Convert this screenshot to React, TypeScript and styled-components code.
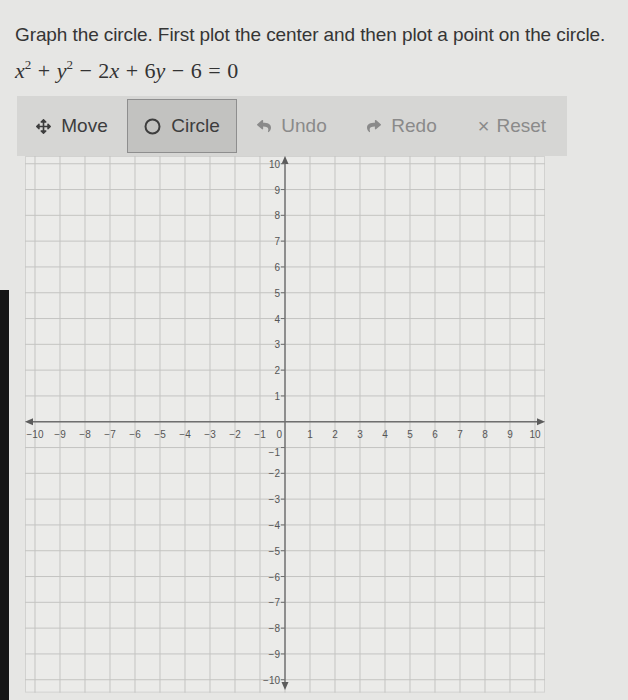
import { FC, ReactNode } from "react";
import styled, { createGlobalStyle } from "styled-components";
import { FaArrowsAlt, FaReply, FaShare } from "react-icons/fa";

const GlobalStyle = createGlobalStyle`
  html, body {
    margin: 0;
    padding: 0;
  }
  body {
    width: 628px;
    height: 700px;
    overflow: hidden;
    background:
      linear-gradient(to right, #161616 0 9px, transparent 9px) 0 290px / 100% 100% no-repeat,
      #e6e6e4;
    font-family: "Liberation Sans", Arial, sans-serif;
  }
`;

const StCross = styled.span`
  font-size: 20px;
  margin-right: -3px;
`;

const CircleIcon: FC = () => (
  <svg width="17" height="17" viewBox="0 0 17 17">
    <circle cx="8.5" cy="8.5" r="7" fill="none" stroke="currentColor" strokeWidth="2" />
  </svg>
);

type Tool = { id: string; label: string; icon: ReactNode; active?: boolean; muted?: boolean };

const getTools = (): Tool[] => [
  { id: "move", label: "Move", icon: <FaArrowsAlt size={15} /> },
  { id: "circle", label: "Circle", icon: <CircleIcon />, active: true },
  { id: "undo", label: "Undo", icon: <FaReply size={14} />, muted: true },
  { id: "redo", label: "Redo", icon: <FaShare size={14} />, muted: true },
  { id: "reset", label: "Reset", icon: <StCross>×</StCross>, muted: true }
];

const UX = 25;
const UY = 25.8;
const PAD_X = 0.4;
const TOP = 10.3;
const BOTTOM = 10.5;
const W = (20 + PAD_X * 2) * UX;
const H = (TOP + BOTTOM) * UY;
const px = (x: number) => (x + 10 + PAD_X) * UX;
const py = (y: number) => (TOP - y) * UY;
const range = Array.from({ length: 21 }, (_, i) => i - 10);
const fmt = (v: number) => (v < 0 ? `\u2212${-v}` : `${v}`);

const StGraph = styled.svg`
  display: block;
  margin-left: 8px;
`;

const StLabel = styled.text`
  font-family: "Liberation Sans", Arial, sans-serif;
  font-size: 10px;
  fill: #555;
`;

const Graph: FC = () => (
  <StGraph width={W} height={H} viewBox={`0 0 ${W} ${H}`}>
    <rect x="0.5" y="0.5" width={W - 1} height={H - 1} fill="#ebebe9" stroke="#d2d2d0" />
    {range.map(v => (
      <line key={`v${v}`} x1={px(v)} x2={px(v)} y1={0} y2={H} stroke="#c4c4c2" strokeWidth="1" />
    ))}
    {range.map(v => (
      <line key={`h${v}`} x1={0} x2={W} y1={py(v)} y2={py(v)} stroke="#c4c4c2" strokeWidth="1" />
    ))}
    <line x1={px(-10.3)} x2={px(10.3)} y1={py(0)} y2={py(0)} stroke="#6f6f6f" strokeWidth="1.4" />
    <line x1={px(0)} x2={px(0)} y1={py(10.2)} y2={py(-10.3)} stroke="#6f6f6f" strokeWidth="1.4" />
    <polygon
      points={`${px(-10.4)},${py(0)} ${px(-10.4) + 8},${py(0) - 3.5} ${px(-10.4) + 8},${py(0) + 3.5}`}
      fill="#5c5c5c"
    />
    <polygon
      points={`${px(10.4)},${py(0)} ${px(10.4) - 8},${py(0) - 3.5} ${px(10.4) - 8},${py(0) + 3.5}`}
      fill="#5c5c5c"
    />
    <polygon
      points={`${px(0)},${py(10.3)} ${px(0) - 3.5},${py(10.3) + 8} ${px(0) + 3.5},${py(10.3) + 8}`}
      fill="#5c5c5c"
    />
    <polygon
      points={`${px(0)},${py(-10.4)} ${px(0) - 3.5},${py(-10.4) - 8} ${px(0) + 3.5},${py(-10.4) - 8}`}
      fill="#5c5c5c"
    />
    {range
      .filter(v => v !== 0)
      .map(v => (
        <g key={`t${v}`}>
          <line x1={px(0) - 4} x2={px(0)} y1={py(v)} y2={py(v)} stroke="#6f6f6f" />
          <StLabel x={px(v)} y={py(0) + 16} textAnchor="middle">
            {fmt(v)}
          </StLabel>
          <StLabel x={px(0) - 5} y={py(v) + (v === -1 ? 8 : 4)} textAnchor="end">
            {fmt(v)}
          </StLabel>
        </g>
      ))}
    <StLabel x={px(0) - 3} y={py(0) + 16} textAnchor="end">
      0
    </StLabel>
  </StGraph>
);

const StPage = styled.div`
  padding: 24px 0 0 17px;
`;

const StTitle = styled.div`
  font-size: 19px;
  color: #353535;
  margin-left: -2px;
  letter-spacing: -0.1px;
`;

const StEquation = styled.div`
  margin-top: 13px;
  margin-left: -2px;
  font-family: "Liberation Serif", "Times New Roman", serif;
  font-size: 22px;
  line-height: 24px;
  color: #333;
  word-spacing: 1px;

  i {
    font-style: italic;
  }

  sup {
    font-size: 13px;
    vertical-align: 9px;
    line-height: 0;
  }
`;

const StToolbar = styled.div`
  display: flex;
  width: 550px;
  height: 60px;
  margin-top: 13px;
  padding: 3px 0;
  box-sizing: border-box;
  background: #d6d6d4;
`;

const StTool = styled.div<{ $active?: boolean; $muted?: boolean }>`
  display: flex;
  align-items: center;
  justify-content: center;
  gap: 10px;
  width: 110px;
  box-sizing: border-box;
  font-size: 19px;
  color: ${p => (p.$muted ? "#8a8a8a" : "#3d3d3d")};
  background: ${p => (p.$active ? "#c2c2c0" : "transparent")};
  border: 1px solid ${p => (p.$active ? "#8e8e8e" : "transparent")};

  svg {
    flex: none;
  }
`;

export default function App() {
  const tools = getTools();
  return (
    <>
      <GlobalStyle />
      <StPage>
        <StTitle>Graph the circle. First plot the center and then plot a point on the circle.</StTitle>
        <StEquation>
          <i>x</i>
          <sup>2</sup> + <i>y</i>
          <sup>2</sup> − 2<i>x</i> + 6<i>y</i> − 6 = 0
        </StEquation>
        <StToolbar>
          {tools.map(t => (
            <StTool key={t.id} $active={t.active} $muted={t.muted}>
              {t.icon}
              <span>{t.label}</span>
            </StTool>
          ))}
        </StToolbar>
        <Graph />
      </StPage>
    </>
  );
}
